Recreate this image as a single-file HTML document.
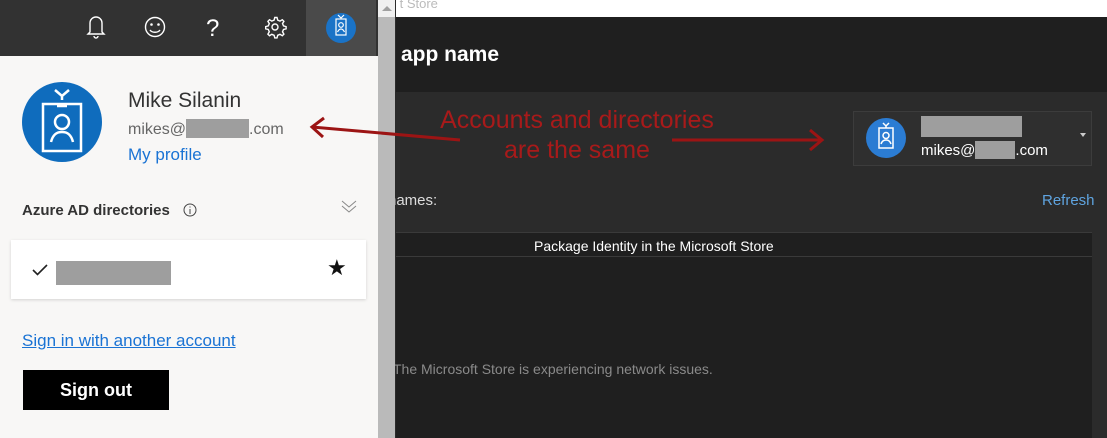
<!DOCTYPE html>
<html><head><style>
body{margin:0;width:1107px;height:438px;overflow:hidden;position:relative;background:#2b2b2b;font-family:"Liberation Sans",sans-serif}
div{position:absolute;box-sizing:border-box}
</style></head><body>
<!-- right app -->
<div style="left:396px;top:0;width:711px;height:17px;background:#fff;color:#bbb;font-size:13px;line-height:8px;">&nbsp;t Store</div>
<div style="left:396px;top:17px;width:711px;height:75px;background:#1f1f1f"></div>
<div style="left:401px;top:43px;color:#fff;font-weight:bold;font-size:21px">app name</div>
<div style="left:396px;top:92px;width:711px;height:346px;background:#2b2b2b"></div>
<div style="left:853px;top:111px;width:239px;height:55px;background:#2f2f2f;border:1px solid #3c3c3c"></div>
<div style="left:866px;top:118px;width:40px;height:40px;border-radius:50%;background:#2b7cd3"></div>
<svg style="position:absolute;left:866px;top:118px" width="40" height="40" viewBox="0 0 40 40"><g fill="none" stroke="#fff" stroke-width="1.5"><rect x="13" y="10" width="14" height="20"/><circle cx="20" cy="17.5" r="3"/><path d="M15 26c1-3 3-4 5-4s4 1 5 4"/><path d="M17 5l3 3 3-3M20 8v2"/></g></svg>
<div style="left:921px;top:116px;width:101px;height:21px;background:#9e9e9e"></div>
<div style="left:921px;top:141px;color:#fff;font-size:15px">mikes@<span style="display:inline-block;width:40px;height:18px;background:#9e9e9e;vertical-align:-4px"></span>.com</div>
<div style="left:1080px;top:133px;width:0;height:0;border-left:3px solid transparent;border-right:3px solid transparent;border-top:4px solid #ccc"></div>
<div style="left:388px;top:192px;color:#ddd;font-size:15px">names:</div>
<div style="left:1042px;top:192px;color:#5fa4e0;font-size:15px">Refresh</div>
<div style="left:396px;top:232px;width:696px;height:206px;background:#1f1f1f;border-top:1px solid #3a3a3a"></div>
<div style="left:396px;top:256px;width:696px;height:1px;background:#3a3a3a"></div>
<div style="left:534px;top:238px;color:#fff;font-size:14px">Package Identity in the Microsoft Store</div>
<div style="left:393px;top:361px;color:#8a8a8a;font-size:14px">The Microsoft Store is experiencing network issues.</div>
<!-- scrollbar -->
<div style="left:378px;top:0;width:17px;height:438px;background:#bababa"></div>
<div style="left:378px;top:0;width:17px;height:17px;background:#f0f0f0"></div>
<div style="left:382px;top:6px;width:0;height:0;border-left:5px solid transparent;border-right:5px solid transparent;border-bottom:5px solid #a0a0a0"></div>
<!-- left panel -->
<div style="left:0;top:0;width:378px;height:56px;background:#323232"></div>
<div style="left:306px;top:0;width:70px;height:56px;background:#4a4a4a"></div>
<svg style="position:absolute;left:0;top:0" width="378" height="56"><g fill="none" stroke="#fff" stroke-width="1.4">
<path d="M90 32v-9a6 6 0 0 1 12 0v9l2 2H88z M94 36a2 2 0 0 0 4 0"/>
<circle cx="155" cy="27" r="9.5"/><circle cx="151.5" cy="24.5" r=".6" fill="#fff"/><circle cx="158.5" cy="24.5" r=".6" fill="#fff"/><path d="M150 30c2 3 8 3 10 0"/>
<circle cx="275" cy="27" r="3"/><path d="M275 17.5l2 0 .7 2.6 2.3 1 2.3-1.4 1.6 1.6-1.4 2.3 1 2.3 2.6.7v2.2l-2.6.7-1 2.3 1.4 2.3-1.6 1.6-2.3-1.4-2.3 1-.7 2.6h-2.2l-.7-2.6-2.3-1-2.3 1.4-1.6-1.6 1.4-2.3-1-2.3-2.6-.7v-2.2l2.6-.7 1-2.3-1.4-2.3 1.6-1.6 2.3 1.4 2.3-1 .7-2.6z"/>
</g>
<text x="206" y="36" fill="#fff" font-size="24" font-family="Liberation Sans">?</text>
<circle cx="341" cy="28" r="15" fill="#1a73c7"/>
<g fill="none" stroke="#fff" stroke-width="1.2"><rect x="336" y="19" width="10" height="16"/><circle cx="341" cy="25" r="2.3"/><path d="M337.5 32c1-2 2-3 3.5-3s2.5 1 3.5 3M338 15l3 3 3-3"/></g></svg>
<div style="left:0;top:56px;width:378px;height:382px;background:#f8f7f6"></div>
<svg style="position:absolute;left:22px;top:82px" width="80" height="80" viewBox="0 0 80 80"><circle cx="40" cy="40" r="40" fill="#0f6cbd"/><g fill="none" stroke="#fff" stroke-width="2.5"><rect x="21" y="22" width="38" height="47"/><circle cx="40" cy="40" r="7"/><path d="M29 60c2-8 6-10 11-10s9 2 11 10"/><path d="M33 8l7 6 7-6M40 14v4M35 24h10"/></g></svg>
<div style="left:128px;top:89px;color:#333;font-size:21px">Mike Silanin</div>
<div style="left:128px;top:119px;color:#666;font-size:16px">mikes@<span style="display:inline-block;width:63px;height:19px;background:#9e9e9e;vertical-align:-4px"></span>.com</div>
<div style="left:128px;top:145px;color:#1a73d4;font-size:17px">My profile</div>
<div style="left:22px;top:202px;color:#333;font-size:15px;font-weight:bold">Azure AD directories</div>
<svg style="position:absolute;left:182px;top:202px" width="16" height="16"><circle cx="8" cy="8" r="6" fill="none" stroke="#444" stroke-width="1"/><path d="M8 7v5M8 4.5v1" stroke="#444"/></svg>
<svg style="position:absolute;left:340px;top:198px" width="18" height="16"><path d="M2 3l7 6 7-6M2 8l7 6 7-6" fill="none" stroke="#888" stroke-width="1"/></svg>
<div style="left:11px;top:240px;width:355px;height:59px;background:#fff;box-shadow:0 1px 3px rgba(0,0,0,.15)"></div>
<svg style="position:absolute;left:31px;top:263px" width="18" height="14"><path d="M2 7l4.5 4.5L16 2" fill="none" stroke="#222" stroke-width="1.6"/></svg>
<div style="left:56px;top:261px;width:115px;height:24px;background:#9e9e9e"></div>
<div style="left:327px;top:255px;font-size:22px;color:#111">★</div>
<div style="left:22px;top:331px;color:#1a73d4;font-size:17px;text-decoration:underline">Sign in with another account</div>
<div style="left:23px;top:370px;width:146px;height:40px;background:#000;color:#fff;font-weight:bold;font-size:18px;text-align:center;line-height:40px">Sign out</div>
<!-- annotations -->
<div style="left:428px;top:105px;color:#a81a1a;font-size:25px;width:298px;text-align:center;line-height:30px">Accounts and directories<br>are the same</div>
<svg style="position:absolute;left:0;top:0" width="1107" height="438"><g stroke="#9c1414" stroke-width="3" fill="none"><path d="M460 140L312 127"/><path d="M324 118l-12 9 11 10"/><path d="M672 140H822"/><path d="M810 130l12 10-12 10"/></g></svg>
</body></html>
